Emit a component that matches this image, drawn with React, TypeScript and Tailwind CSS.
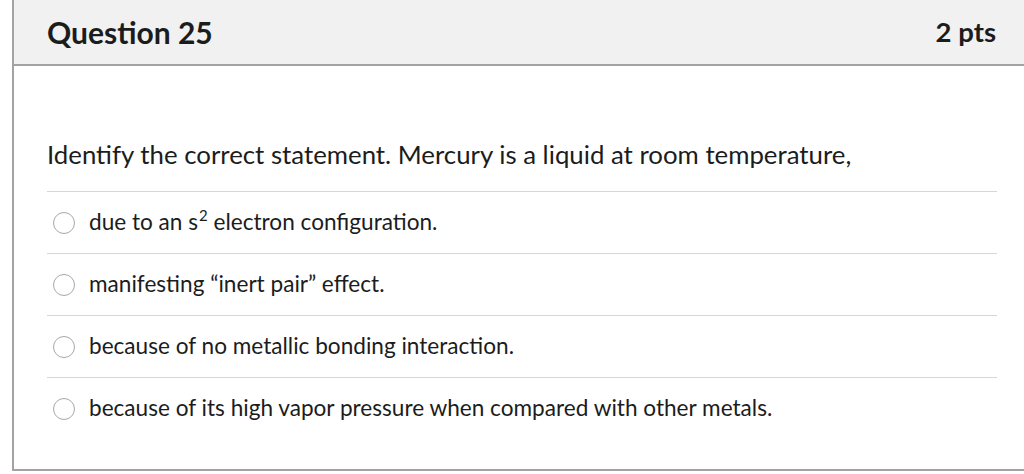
const OPTIONS = [
  <>due to an s<span className="text-[15px] relative -top-[9px] ml-[1px]">2</span> electron configuration.</>,
  <>manifesting “inert pair” effect.</>,
  <>because of no metallic bonding interaction.</>,
  <>because of its high vapor pressure when compared with other metals.</>,
];

export default function App() {
  return (
    <div
      className="w-[1024px] h-[474px] overflow-hidden bg-white text-[#1c1c1c]"
      style={{ fontFamily: "Lato, 'Open Sans', sans-serif" }}
    >
      <div className="ml-[12px] w-[1030px] border-l-2 border-b-2 border-[#a3a3a3]">
        <div className="h-[66px] flex items-center justify-between bg-[#f1f1f1] border-b-2 border-[#a3a3a3] pl-[33px] pr-[46px]">
          <h2 className="text-[30px] font-bold leading-none">Question 25</h2>
          <span className="text-[27.5px] font-bold leading-none">2 pts</span>
        </div>
        <div className="pl-[33px] pt-[72px] pb-[30px]">
          <p className="text-[25.8px] leading-[32px] mb-[21px]">
            Identify the correct statement. Mercury is a liquid at room temperature,
          </p>
          <div className="w-[950px]">
            {OPTIONS.map((opt, i) => (
              <div key={i} className="h-[62px] border-t border-[#d6d6d6] flex items-center">
                <span className="w-[22px] h-[22px] rounded-full border-[1.5px] border-[#a8a8a8] bg-white ml-[6px] mr-[14px] shrink-0" />
                <span className="text-[22.6px] leading-none">{opt}</span>
              </div>
            ))}
          </div>
        </div>
      </div>
    </div>
  );
}
